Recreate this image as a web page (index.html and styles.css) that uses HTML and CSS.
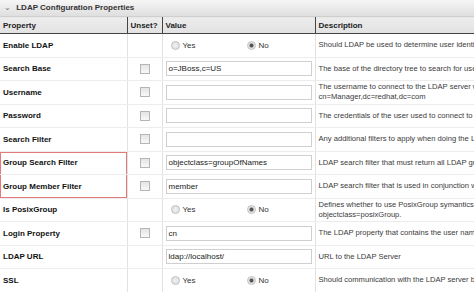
FILE: index.html
```html
<!DOCTYPE html>
<html>
<head>
  <title>LDAP Configuration Properties</title>
  <meta charset="UTF-8">
  <link rel="stylesheet" href="styles.css">
</head>
<body>

<div class="panel-title"><span class="chevron">&#8964;</span> LDAP Configuration Properties</div>

<table class="props">
  <colgroup>
    <col class="col-prop">
    <col class="col-unset">
    <col class="col-value">
    <col class="col-desc">
  </colgroup>
  <tr>
    <th>Property</th>
    <th>Unset?</th>
    <th>Value</th>
    <th>Description</th>
  </tr>
  <tr>
    <td class="name">Enable LDAP</td>
    <td></td>
    <td><div class="radios"><label><span class="radio"></span>Yes</label><label><span class="radio on"></span>No</label></div></td>
    <td class="desc">Should LDAP be used to determine user identity?</td>
  </tr>
  <tr>
    <td class="name">Search Base</td>
    <td class="unset"><span class="check"></span></td>
    <td><div class="field">o=JBoss,c=US</div></td>
    <td class="desc">The base of the directory tree to search for users.</td>
  </tr>
  <tr>
    <td class="name">Username</td>
    <td class="unset"><span class="check"></span></td>
    <td><div class="field"></div></td>
    <td class="desc">The username to connect to the LDAP server with, e.g.<br>cn=Manager,dc=redhat,dc=com</td>
  </tr>
  <tr>
    <td class="name">Password</td>
    <td class="unset"><span class="check"></span></td>
    <td><div class="field"></div></td>
    <td class="desc">The credentials of the user used to connect to the LDAP server.</td>
  </tr>
  <tr>
    <td class="name">Search Filter</td>
    <td class="unset"><span class="check"></span></td>
    <td><div class="field"></div></td>
    <td class="desc">Any additional filters to apply when doing the LDAP search.</td>
  </tr>
  <tr>
    <td class="name hl-top">Group Search Filter</td>
    <td class="unset"><span class="check"></span></td>
    <td><div class="field">objectclass=groupOfNames</div></td>
    <td class="desc">LDAP search filter that must return all LDAP groups.</td>
  </tr>
  <tr>
    <td class="name hl-bottom">Group Member Filter</td>
    <td class="unset"><span class="check"></span></td>
    <td><div class="field">member</div></td>
    <td class="desc">LDAP search filter that is used in conjunction with the group search.</td>
  </tr>
  <tr>
    <td class="name">Is PosixGroup</td>
    <td></td>
    <td><div class="radios"><label><span class="radio"></span>Yes</label><label><span class="radio on"></span>No</label></div></td>
    <td class="desc">Defines whether to use PosixGroup symantics for groups with<br>objectclass=posixGroup.</td>
  </tr>
  <tr>
    <td class="name">Login Property</td>
    <td class="unset"><span class="check"></span></td>
    <td><div class="field">cn</div></td>
    <td class="desc">The LDAP property that contains the user name.</td>
  </tr>
  <tr>
    <td class="name">LDAP URL</td>
    <td></td>
    <td><div class="field">ldap://localhost/</div></td>
    <td class="desc">URL to the LDAP Server</td>
  </tr>
  <tr>
    <td class="name">SSL</td>
    <td></td>
    <td><div class="radios"><label><span class="radio"></span>Yes</label><label><span class="radio on"></span>No</label></div></td>
    <td class="desc">Should communication with the LDAP server be encrypted?</td>
  </tr>
</table>

</body>
</html>
```

FILE: styles.css
```css
body {
    margin: 0;
    background-color: white;
    color: #222;
    font-family: "Liberation Sans", Arial, sans-serif;
    font-size: 8px;
    overflow: hidden;
}
.panel-title {
    height: 16px;
    line-height: 16px;
    padding-left: 4px;
    font-weight: bold;
    color: #333;
    background: linear-gradient(#f6f6f6, #dedede);
}
.chevron {
    display: inline-block;
    width: 10px;
    color: #777;
    font-weight: normal;
}
.props {
    width: 620px;
    border-collapse: collapse;
    table-layout: fixed;
}
.col-prop { width: 127px; }
.col-unset { width: 35px; }
.col-value { width: 153px; }
.col-desc { width: 305px; }
.props th {
    height: 16px;
    padding: 0 3px;
    text-align: left;
    font-weight: bold;
    background: linear-gradient(#ededed, #e2e2e2);
    border-top: 1px solid #cfcfcf;
    border-bottom: 1px solid #444;
    border-left: 1px solid #444;
}
.props th:first-child {
    border-left: 0;
}
.props td {
    height: 22.5px;
    padding: 0 3px;
    border-bottom: 1px solid #ececec;
    border-left: 1px solid #e2e2e2;
    white-space: nowrap;
    overflow: hidden;
}
.props td:first-child {
    border-left: 0;
}
.props td.name {
    font-weight: bold;
    color: #111;
}
.props td.desc {
    color: #3a3a3a;
    font-size: 7.6px;
    line-height: 10px;
}
.hl-top {
    box-shadow: inset 1px 1px 0 #e27a7a, inset -1px 0 0 #e27a7a;
}
.hl-bottom {
    box-shadow: inset 1px -1px 0 #e27a7a, inset -1px 0 0 #e27a7a;
}
.unset {
    text-align: center;
}
.check {
    display: inline-block;
    width: 8px;
    height: 8px;
    vertical-align: middle;
    border: 1px solid #b5b5b5;
    background: linear-gradient(#e4e4e4, #f8f8f8);
}
.field {
    height: 13px;
    line-height: 13px;
    padding-left: 2px;
    border: 1px solid #cfcfcf;
    color: #222;
}
.radios {
    display: flex;
    padding-left: 5px;
}
.radios label {
    display: flex;
    flex-shrink: 0;
    align-items: center;
    gap: 3px;
    width: 76px;
    color: #333;
}
.radio {
    width: 7px;
    height: 7px;
    border-radius: 50%;
    border: 1px solid #c4c4c4;
    background: radial-gradient(#f2f2f2, #d8d8d8);
}
.radio.on {
    background: radial-gradient(#555 0, #555 1.5px, #e4e4e4 2.5px);
}
```
